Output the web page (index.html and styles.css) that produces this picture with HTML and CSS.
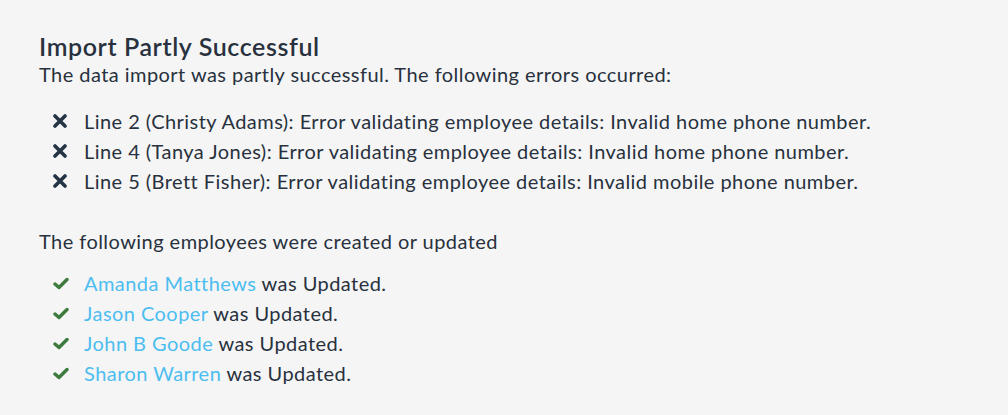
FILE: index.html
```html
<!DOCTYPE html>
<html>
<head>
<meta charset="utf-8">
<link rel="stylesheet" href="styles.css">
</head>
<body>
<div class="panel">
  <h2 class="title">Import Partly Successful</h2>
  <p class="intro">The data import was partly successful. The following errors occurred:</p>
  <ul class="list errors">
    <li><svg class="icon" viewBox="0 0 14 14"><path d="M2 2L12 12M12 2L2 12" stroke="#253445" stroke-width="3.6" stroke-linecap="round"/></svg><span>Line 2 (Christy Adams): Error validating employee details: Invalid home phone number.</span></li>
    <li><svg class="icon" viewBox="0 0 14 14"><path d="M2 2L12 12M12 2L2 12" stroke="#253445" stroke-width="3.6" stroke-linecap="round"/></svg><span>Line 4 (Tanya Jones): Error validating employee details: Invalid home phone number.</span></li>
    <li><svg class="icon" viewBox="0 0 14 14"><path d="M2 2L12 12M12 2L2 12" stroke="#253445" stroke-width="3.6" stroke-linecap="round"/></svg><span>Line 5 (Brett Fisher): Error validating employee details: Invalid mobile phone number.</span></li>
  </ul>
  <p class="intro second">The following employees were created or updated</p>
  <ul class="list success">
    <li><svg class="icon check" viewBox="0 0 16 13"><path d="M2 7L6 10.5L14 2.5" fill="none" stroke="#3d7a3d" stroke-width="3.4" stroke-linecap="round" stroke-linejoin="round"/></svg><span><a href="#">Amanda Matthews</a> was Updated.</span></li>
    <li><svg class="icon check" viewBox="0 0 16 13"><path d="M2 7L6 10.5L14 2.5" fill="none" stroke="#3d7a3d" stroke-width="3.4" stroke-linecap="round" stroke-linejoin="round"/></svg><span><a href="#">Jason Cooper</a> was Updated.</span></li>
    <li><svg class="icon check" viewBox="0 0 16 13"><path d="M2 7L6 10.5L14 2.5" fill="none" stroke="#3d7a3d" stroke-width="3.4" stroke-linecap="round" stroke-linejoin="round"/></svg><span><a href="#">John B Goode</a> was Updated.</span></li>
    <li><svg class="icon check" viewBox="0 0 16 13"><path d="M2 7L6 10.5L14 2.5" fill="none" stroke="#3d7a3d" stroke-width="3.4" stroke-linecap="round" stroke-linejoin="round"/></svg><span><a href="#">Sharon Warren</a> was Updated.</span></li>
  </ul>
</div>
</body>
</html>
```

FILE: styles.css
```css
html, body {
  margin: 0;
  padding: 0;
  background: #f5f5f5;
}
body {
  font-family: Lato, "Liberation Sans", sans-serif;
  color: #28313d;
  width: 1008px;
  height: 415px;
  overflow: hidden;
}
.panel {
  padding: 31px 39px 0 39px;
}
.title {
  margin: 0;
  font-size: 25px;
  font-weight: 600;
  line-height: 30px;
  letter-spacing: 0.6px;
  color: #28313d;
}
.intro {
  margin: 0;
  font-size: 20px;
  line-height: 26px;
  letter-spacing: 0.45px;
}
.list {
  list-style: none;
  margin: 19px 0 0 0;
  padding: 0 0 0 14px;
}
.list li {
  display: flex;
  align-items: center;
  height: 30px;
  font-size: 20px;
  letter-spacing: 0.45px;
}
.icon {
  width: 14px;
  height: 14px;
  margin-right: 17px;
  flex: none;
}
.check {
  width: 16px;
  height: 13px;
  margin-right: 15px;
}
.second {
  margin-top: 32px;
}
.success {
  margin-top: 14px;
}
a {
  color: #4cbdf0;
  text-decoration: none;
}
```
